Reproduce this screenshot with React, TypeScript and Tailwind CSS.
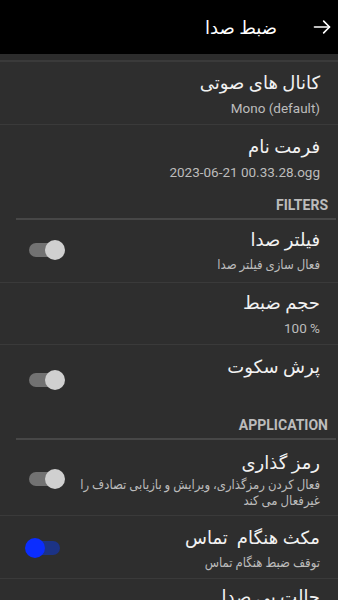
import React from 'react';

const font = { fontFamily: 'Roboto, "DejaVu Sans", "Noto Sans", sans-serif' };
const subFont = { fontFamily: 'Roboto, "DejaVu Sans Condensed", "DejaVu Sans", sans-serif' };

const isArabic = (s: string) => /[\u0600-\u06FF]/.test(s);

const Toggle: React.FC<{ on?: boolean }> = ({ on }) => {
    if (on) {
        return (
            <div className="relative w-[40px] h-[20px]">
                <div className="absolute left-[5px] top-[3px] w-[30px] h-[14px] rounded-full bg-[#1c3386]" />
                <div className="absolute left-0 top-0 w-[20px] h-[20px] rounded-full bg-[#0b2dff]" />
            </div>
        );
    }
    return (
        <div className="relative w-[40px] h-[20px]">
            <div className="absolute left-[4px] top-[3px] w-[30px] h-[14px] rounded-full bg-[#727272]" />
            <div className="absolute left-[20px] top-0 w-[20px] h-[20px] rounded-full bg-[#d0d0d0]" />
        </div>
    );
};

interface RowProps {
    title: string;
    sub?: string[];
    toggle?: 'on' | 'off';
    divider?: boolean;
    subTight?: boolean;
    className?: string;
}

const Row: React.FC<RowProps> = ({ title, sub, toggle, divider = true, subTight, className = '' }) => (
    <div className={`flex items-center gap-2 pr-[18px] pl-[25px] ${divider ? 'border-b border-[#3a3a3a]' : ''} ${className}`}>
        <div className="flex-1 min-w-0 self-start">
            <p className="text-[18px] leading-[28px] text-[#f2f2f2] whitespace-pre">{title}</p>
            {sub && (
                <div className={`text-[#bcbcbc] ${subTight ? 'leading-[16px]' : 'leading-[18px] mt-[2px]'}`} style={subFont}>
                    {sub.map((s) => (
                        <p
                            key={s}
                            dir="auto"
                            className={`whitespace-nowrap text-right ${isArabic(s) ? 'text-[13px] [font-stretch:condensed]' : 'text-[13.5px]'}`}
                        >
                            {s}
                        </p>
                    ))}
                </div>
            )}
        </div>
        {toggle && (
            <div className="shrink-0">
                <Toggle on={toggle === 'on'} />
            </div>
        )}
    </div>
);

const Section: React.FC<{ label: string }> = ({ label }) => (
    <div className="ml-4 mr-[2px] pr-[8px] pt-[10px] pb-[5px] border-b-2 border-[#474747]">
        <p className="text-[14px] leading-[16px] font-bold text-[#bcbcbc]" style={{ fontFamily: 'Roboto, "Liberation Sans", sans-serif' }}>{label}</p>
    </div>
);

export default function App() {
    return (
        <div className="w-[338px] h-[600px] overflow-hidden bg-[#2e2e2e] flex flex-col" style={font}>
            <header className="h-[54px] bg-black flex items-center justify-end gap-[35px] pr-[6px] shrink-0">
                <span dir="rtl" className="text-[18px] text-white">ضبط صدا</span>
                <svg width="20" height="20" viewBox="0 0 24 24" fill="none" stroke="white" strokeWidth="2" strokeLinecap="round" strokeLinejoin="round">
                    <path d="M3 12h18" />
                    <path d="M14 5l7 7-7 7" />
                </svg>
            </header>
            <div className="h-[8px] bg-[#2c2c2c] border-b-2 border-[#3a3a3a] shrink-0" />
            <div dir="rtl" className="flex flex-col">
                <Row title="کانال های صوتی" sub={['Mono (default)']} className="pt-[7px] pb-[7px]" />
                <Row title="فرمت نام" sub={['2023-06-21 00.33.28.ogg']} divider={false} className="pt-[8px] pb-[6px]" />
                <Section label="FILTERS" />
                <Row title="فیلتر صدا" sub={['فعال سازی فیلتر صدا']} toggle="off" className="pt-[6px] pb-[8px]" />
                <Row title="حجم ضبط" sub={['100 %']} className="pt-[6px] pb-[7px]" />
                <Row title="پرش سکوت" toggle="off" divider={false} className="h-[62px] pt-[8px]" />
                <Section label="APPLICATION" />
                <Row title="رمز گذاری" sub={['فعال کردن رمزگذاری، ویرایش و بازیابی تصادف را', 'غیرفعال می کند']} subTight toggle="off" className="pt-[9px] pb-[6px]" />
                <Row title="مکث هنگام  تماس" sub={['توقف ضبط هنگام تماس']} toggle="on" className="pt-[8px] pb-[6px]" />
                <Row title="حالت بی صدا" toggle="off" divider={false} className="h-[62px] pt-[4px]" />
            </div>
        </div>
    );
}
